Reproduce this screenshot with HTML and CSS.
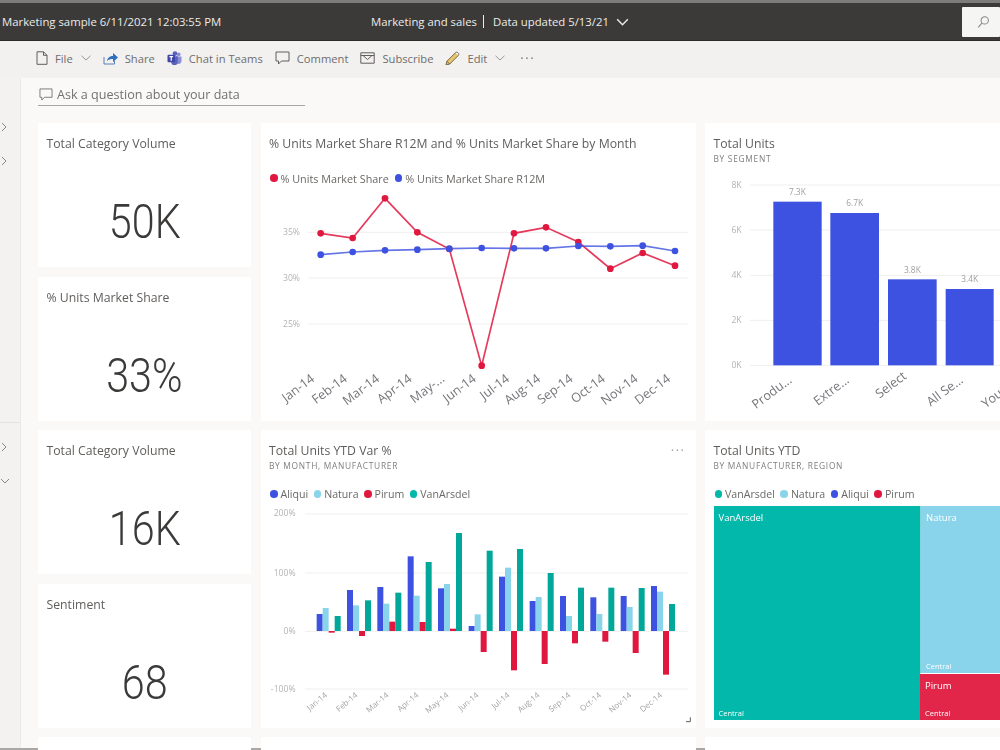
FILE: index.html
```html
<!DOCTYPE html>
<html lang="en">
<head>
<meta charset="utf-8">
<title>Marketing sample</title>
<link rel="stylesheet" href="styles.css">
</head>
<body>
<div class="app">
  <div class="topline"></div>
  <header class="header">
    <div class="report-name">Marketing sample 6/11/2021 12:03:55 PM</div>
    <div class="report-meta">
      <span>Marketing and sales</span><span class="pipe"></span><span>Data updated 5/13/21</span>
      <svg class="meta-chevron" viewBox="0 0 14 9"><path d="M1 1.500l6 6 6-6"/></svg>
    </div>
    <div class="search">
      <svg class="search-icon" viewBox="0 0 16 16"><circle cx="9.500" cy="6" r="4.500"/><path d="M6 9.500L1.500 14.500"/></svg>
    </div>
  </header>
  <nav class="toolbar">
    <div class="tool">
      <svg class="icon" viewBox="0 0 12 14"><path class="ln" d="M1 .8h6.500L11 4.300v9H1zM7.500.8v3.500H11"/></svg>
      <span>File</span>
      <svg class="chev" viewBox="0 0 10 6"><path d="M.5.8L5 5 9.500.8"/></svg>
    </div>
    <div class="tool">
      <svg class="icon wide" viewBox="0 0 15 14"><path class="ln-blue" d="M1 6v7h10.500V10"/><path class="fill-blue" d="M4 10c.5-3.500 3-5 6-5V2l5 4.500L10 11V8C7.500 8 5.500 8.500 4 10z"/></svg>
      <span>Share</span>
    </div>
    <div class="tool">
      <svg class="icon wide" viewBox="0 0 15 15"><circle class="fill-purple-l" cx="12" cy="3.500" r="2"/><circle class="fill-purple" cx="8" cy="2.800" r="2.500"/><path class="fill-purple-l" d="M9 6h6v5a3 3 0 0 1-5 2z"/><path class="fill-purple" d="M3 5.500h8v6a3.500 3.500 0 0 1-7 .5z"/><rect class="fill-indigo" x="0" y="4" width="8" height="8" rx="1"/><path class="ln-white" d="M2 6h4M4 6v4.500"/></svg>
      <span>Chat in Teams</span>
    </div>
    <div class="tool">
      <svg class="icon wide" viewBox="0 0 15 14"><path class="ln" d="M1 1h13v9H6.500L3.500 13v-3H1z"/></svg>
      <span>Comment</span>
    </div>
    <div class="tool">
      <svg class="icon wide" viewBox="0 0 15 12"><path class="ln" d="M.8.800h13.400v10.400H.8zM.8 3.500h13.400M3 3.500l4.500 4 4.500-4"/></svg>
      <span>Subscribe</span>
    </div>
    <div class="tool">
      <svg class="icon wide" viewBox="0 0 15 15"><path class="fill-pencil" d="M1.500 11L10.500 2l3 3-9 9-4 1z"/><path class="ln-pencil" d="M1.500 11L10.500 2c1-1 2-1 3 0s1 2 0 3l-9 9-4 1zM1.500 11l3 3"/></svg>
      <span>Edit</span>
      <svg class="chev" viewBox="0 0 10 6"><path d="M.5.8L5 5 9.500.8"/></svg>
    </div>
    <div class="more">···</div>
  </nav>
  <div class="body">
    <aside class="sidebar">
      <div class="side-group first">
        <svg class="side-chev" viewBox="0 0 6 10"><path d="M1 1l4 4-4 4"/></svg>
        <svg class="side-chev" viewBox="0 0 6 10"><path d="M1 1l4 4-4 4"/></svg>
      </div>
      <div class="side-group second">
        <svg class="side-chev" viewBox="0 0 6 10"><path d="M1 1l4 4-4 4"/></svg>
        <svg class="side-chev down" viewBox="0 0 10 6"><path d="M1 1l4 4 4-4"/></svg>
      </div>
    </aside>
    <main class="main">
      <div class="ask">
        <svg class="ask-icon" viewBox="0 0 15 14"><path d="M1 1h13v9H6L3 13v-3H1z"/></svg>
        <span>Ask a question about your data</span>
      </div>
      <div class="grid">
        <section class="card kpi">
          <h2 class="title">Total Category Volume</h2>
          <div class="value"><span>50K</span></div>
        </section>

        <section class="card span-2">
          <h2 class="title">% Units Market Share R12M and % Units Market Share by Month</h2>
          <div class="legend legend-line">
            <span class="item"><i class="dot red"></i>% Units Market Share</span>
            <span class="item"><i class="dot blue"></i>% Units Market Share R12M</span>
          </div>
          <svg class="chart chart-line" viewBox="3 180 1305 708">
            <g class="grid-lines">
              <path d="M145 322H1283M145 459H1283M145 597H1283"/>
            </g>
            <g class="y-label">
              <text x="120" y="329">35%</text>
              <text x="120" y="468">30%</text>
              <text x="120" y="606">25%</text>
            </g>
            <polyline class="line-red" points="182,325 278,339 375,220 472,322 568,372 665,722 762,325 858,307 955,351 1051,431 1148,384 1245,422"/>
            <polyline class="line-blue" points="182,389 278,381 375,376 472,374 568,371 665,369 762,370 858,370 955,363 1051,364 1148,362 1245,378"/>
            <g class="pts-red">
              <circle cx="182" cy="325" r="10"/><circle cx="278" cy="339" r="10"/><circle cx="375" cy="220" r="10"/><circle cx="472" cy="322" r="10"/><circle cx="568" cy="372" r="10"/><circle cx="665" cy="722" r="10"/><circle cx="762" cy="325" r="10"/><circle cx="858" cy="307" r="10"/><circle cx="955" cy="351" r="10"/><circle cx="1051" cy="431" r="10"/><circle cx="1148" cy="384" r="10"/><circle cx="1245" cy="422" r="10"/>
            </g>
            <g class="pts-blue">
              <circle cx="182" cy="389" r="10"/><circle cx="278" cy="381" r="10"/><circle cx="375" cy="376" r="10"/><circle cx="472" cy="374" r="10"/><circle cx="568" cy="371" r="10"/><circle cx="665" cy="369" r="10"/><circle cx="762" cy="370" r="10"/><circle cx="858" cy="370" r="10"/><circle cx="955" cy="363" r="10"/><circle cx="1051" cy="364" r="10"/><circle cx="1148" cy="362" r="10"/><circle cx="1245" cy="378" r="10"/>
            </g>
            <g class="x-label">
              <text transform="translate(166 766) rotate(-37)">Jan-14</text>
              <text transform="translate(264 766) rotate(-37)">Feb-14</text>
              <text transform="translate(361 766) rotate(-37)">Mar-14</text>
              <text transform="translate(458 766) rotate(-37)">Apr-14</text>
              <text transform="translate(556 766) rotate(-37)">May-...</text>
              <text transform="translate(651 766) rotate(-37)">Jun-14</text>
              <text transform="translate(751 766) rotate(-37)">Jul-14</text>
              <text transform="translate(844 766) rotate(-37)">Aug-14</text>
              <text transform="translate(941 766) rotate(-37)">Sep-14</text>
              <text transform="translate(1038 766) rotate(-37)">Oct-14</text>
              <text transform="translate(1136 766) rotate(-37)">Nov-14</text>
              <text transform="translate(1234 766) rotate(-37)">Dec-14</text>
            </g>
          </svg>
        </section>

        <section class="card span-2">
          <h2 class="title">Total Units</h2>
          <div class="subtitle">BY SEGMENT</div>
          <svg class="chart chart-bar" viewBox="15 123 1305 765">
            <g class="grid-lines">
              <path d="M150 180H1320M150 315H1320M150 451H1320M150 586H1320M150 721H1320"/>
            </g>
            <g class="y-label">
              <text x="125" y="189">8K</text>
              <text x="125" y="324">6K</text>
              <text x="125" y="460">4K</text>
              <text x="125" y="595">2K</text>
              <text x="125" y="730">0K</text>
            </g>
            <g class="bars-blue">
              <rect x="220" y="230" width="145" height="491"/>
              <rect x="391" y="264" width="146" height="457"/>
              <rect x="564" y="463" width="146" height="258"/>
              <rect x="737" y="492" width="144" height="229"/>
            </g>
            <g class="data-label">
              <text x="292" y="210">7.3K</text>
              <text x="464" y="243">6.7K</text>
              <text x="637" y="443">3.8K</text>
              <text x="809" y="472">3.4K</text>
            </g>
            <g class="x-label">
              <text transform="translate(278 770) rotate(-37)">Produ...</text>
              <text transform="translate(450 770) rotate(-37)">Extre...</text>
              <text transform="translate(622 758) rotate(-37)">Select</text>
              <text transform="translate(792 770) rotate(-37)">All Se...</text>
              <text transform="translate(964 770) rotate(-37)">Youth...</text>
            </g>
          </svg>
        </section>

        <section class="card kpi">
          <h2 class="title">% Units Market Share</h2>
          <div class="value"><span>33%</span></div>
        </section>

        <section class="card kpi">
          <h2 class="title">Total Category Volume</h2>
          <div class="value"><span>16K</span></div>
        </section>

        <section class="card span-2 has-more">
          <h2 class="title">Total Units YTD Var %</h2>
          <div class="subtitle">BY MONTH, MANUFACTURER</div>
          <div class="dots-menu">···</div>
          <div class="legend legend-col">
            <span class="item"><i class="dot blue"></i>Aliqui</span>
            <span class="item"><i class="dot sky"></i>Natura</span>
            <span class="item"><i class="dot red"></i>Pirum</span>
            <span class="item"><i class="dot teal"></i>VanArsdel</span>
          </div>
          <svg class="chart chart-col" viewBox="3 213 1305 681">
            <g class="grid-lines">
              <path d="M135 252H1283M135 429H1283M135 604H1283M135 777H1283"/>
            </g>
            <g class="y-label">
              <text x="107" y="259">200%</text>
              <text x="107" y="438">100%</text>
              <text x="107" y="612">0%</text>
              <text x="107" y="787">-100%</text>
            </g>
            <g class="bars-blue">
              <rect x="170" y="552" width="18" height="51"/><rect x="261" y="480" width="18" height="123"/><rect x="352" y="471" width="18" height="132"/><rect x="443" y="379" width="18" height="224"/><rect x="534" y="475" width="18" height="128"/><rect x="626" y="588" width="18" height="15"/><rect x="717" y="440" width="18" height="163"/><rect x="809" y="513" width="18" height="90"/><rect x="900" y="498" width="18" height="105"/><rect x="991" y="502" width="18" height="101"/><rect x="1082" y="498" width="18" height="105"/><rect x="1173" y="468" width="18" height="135"/>
            </g>
            <g class="bars-sky">
              <rect x="188" y="534" width="18" height="69"/><rect x="279" y="526" width="18" height="77"/><rect x="370" y="521" width="18" height="82"/><rect x="461" y="497" width="18" height="106"/><rect x="552" y="462" width="18" height="141"/><rect x="644" y="553" width="18" height="50"/><rect x="735" y="413" width="18" height="190"/><rect x="827" y="501" width="18" height="102"/><rect x="918" y="558" width="18" height="45"/><rect x="1009" y="552" width="18" height="51"/><rect x="1100" y="531" width="18" height="72"/><rect x="1191" y="485" width="18" height="118"/>
            </g>
            <g class="bars-red">
              <rect x="206" y="603" width="18" height="5"/><rect x="297" y="603" width="18" height="15"/><rect x="388" y="575" width="18" height="28"/><rect x="479" y="576" width="18" height="27"/><rect x="570" y="596" width="18" height="7"/><rect x="662" y="603" width="18" height="63"/><rect x="753" y="603" width="18" height="118"/><rect x="845" y="603" width="18" height="99"/><rect x="936" y="603" width="18" height="37"/><rect x="1027" y="603" width="18" height="32"/><rect x="1118" y="603" width="18" height="66"/><rect x="1209" y="603" width="18" height="131"/>
            </g>
            <g class="bars-teal">
              <rect x="224" y="558" width="18" height="45"/><rect x="315" y="511" width="18" height="92"/><rect x="406" y="488" width="18" height="115"/><rect x="497" y="396" width="18" height="207"/><rect x="588" y="309" width="18" height="294"/><rect x="680" y="362" width="18" height="241"/><rect x="771" y="357" width="18" height="246"/><rect x="863" y="429" width="18" height="174"/><rect x="954" y="473" width="18" height="130"/><rect x="1045" y="473" width="18" height="130"/><rect x="1136" y="474" width="18" height="129"/><rect x="1227" y="522" width="18" height="81"/>
            </g>
            <g class="x-label small">
              <text transform="translate(203 798) rotate(-40)">Jan-14</text>
              <text transform="translate(295 798) rotate(-40)">Feb-14</text>
              <text transform="translate(388 798) rotate(-40)">Mar-14</text>
              <text transform="translate(478 798) rotate(-40)">Apr-14</text>
              <text transform="translate(568 798) rotate(-40)">May-14</text>
              <text transform="translate(658 798) rotate(-40)">Jun-14</text>
              <text transform="translate(751 798) rotate(-40)">Jul-14</text>
              <text transform="translate(841 798) rotate(-40)">Aug-14</text>
              <text transform="translate(933 798) rotate(-40)">Sep-14</text>
              <text transform="translate(1025 798) rotate(-40)">Oct-14</text>
              <text transform="translate(1116 798) rotate(-40)">Nov-14</text>
              <text transform="translate(1208 798) rotate(-40)">Dec-14</text>
            </g>
            <path class="resize" d="M1291 862V875H1278"/>
          </svg>
        </section>

        <section class="card span-2">
          <h2 class="title">Total Units YTD</h2>
          <div class="subtitle">BY MANUFACTURER, REGION</div>
          <div class="legend legend-col">
            <span class="item"><i class="dot teal"></i>VanArsdel</span>
            <span class="item"><i class="dot sky"></i>Natura</span>
            <span class="item"><i class="dot blue"></i>Aliqui</span>
            <span class="item"><i class="dot red"></i>Pirum</span>
          </div>
          <div class="treemap">
            <div class="tile t-van"><span class="tile-name">VanArsdel</span><span class="tile-sub">Central</span></div>
            <div class="tree-col">
              <div class="tile t-nat"><span class="tile-name">Natura</span><span class="tile-sub">Central</span></div>
              <div class="tile t-pir"><span class="tile-name">Pirum</span><span class="tile-sub">Central</span></div>
            </div>
          </div>
        </section>

        <section class="card kpi">
          <h2 class="title">Sentiment</h2>
          <div class="value"><span>68</span></div>
        </section>

        <section class="card"></section>
        <section class="card"></section>
        <section class="card"></section>
      </div>
    </main>
  </div>
  <div class="footer-line"></div>
</div>
</body>
</html>
```
FILE: styles.css
```css
* { box-sizing: border-box; }
html, body { margin: 0; padding: 0; }
body { background: #faf9f8; font-family: "Open Sans", "Noto Sans", sans-serif; color: #605e5c; }

.app { width: 1000px; height: 750px; display: flex; flex-direction: column; overflow: hidden; filter: blur(.7px); }
.topline { height: 3px; flex: none; background: #7d7c7a; }

.header { height: 38px; flex: none; display: flex; align-items: center; background: #3b3a38; color: #ecebea; font-size: 11.350px; border-bottom: 1px solid #2c2b2a; }
.report-name { width: 371px; padding-left: 2px; white-space: nowrap; }
.report-meta { width: 591px; display: flex; align-items: center; white-space: nowrap; }
.pipe { width: 1px; height: 13px; margin: 0 9px 0 6px; background: #ecebea; }
.meta-chevron { width: 13px; height: 8px; margin-left: 7px; fill: none; stroke: #ecebea; stroke-width: 1.600; }
.search { width: 38px; height: 30px; flex: none; display: flex; align-items: center; padding-left: 15px; background: #f5f5f4; border-radius: 1px; }
.search-icon { width: 13px; height: 14px; fill: none; stroke: #8a8886; stroke-width: 1.300; }

.toolbar { height: 37px; flex: none; display: flex; align-items: center; gap: 12px; padding: 0 0 3px 36px; background: #f2f1f0; font-size: 11.200px; color: #6f6d6b; }
.tool { display: flex; align-items: center; gap: 7px; white-space: nowrap; }
.icon { width: 12px; height: 14px; }
.icon.wide { width: 15px; }
.ln { fill: none; stroke: #5f5e5c; stroke-width: 1; }
.ln-blue { fill: none; stroke: #5a7fb8; stroke-width: 1; }
.fill-blue { fill: #2f6fc0; }
.fill-purple { fill: #5b63b8; }
.fill-purple-l { fill: #8a90d8; }
.fill-indigo { fill: #3f46a8; }
.ln-white { fill: none; stroke: #fff; stroke-width: 1.300; }
.fill-pencil { fill: #e9c46a; }
.ln-pencil { fill: none; stroke: #6b6246; stroke-width: 1; }
.chev { width: 10px; height: 6px; margin-left: 1px; fill: none; stroke: #8f8d8b; stroke-width: .9; }
.more { margin-left: 3px; font-size: 13px; letter-spacing: 1.500px; color: #77757a; }

.body { flex: 1; min-height: 0; display: flex; }
.sidebar { width: 21px; flex: none; background: #f3f2f1; border-right: 1px solid #eceae8; display: flex; flex-direction: column; }
.side-group { display: flex; flex-direction: column; gap: 24px; }
.side-group.first { height: 345px; padding-top: 44px; border-bottom: 1px solid #e4e2e0; }
.side-group.second { padding-top: 19px; }
.side-chev { width: 6px; height: 10px; margin-left: 1px; fill: none; stroke: #8a8886; stroke-width: 1; }
.side-chev.down { width: 10px; height: 6px; margin: 2px 0 0; }

.main { flex: 1; min-width: 0; padding-left: 17px; background: #faf9f8; }
.ask { width: 267px; height: 28px; padding-top: 6px; display: flex; align-items: center; gap: 4px; font-size: 12.600px; color: #737170; border-bottom: 1px solid #a8a6a4; white-space: nowrap; }
.ask-icon { width: 14px; height: 13px; margin-left: 1px; fill: none; stroke: #77757a; stroke-width: 1; }

.grid { margin-top: 17px; display: grid; grid-template-columns: 213px 435px 435px; grid-auto-rows: 144px; gap: 9.500px; }
.card { position: relative; background: #fff; min-width: 0; overflow: hidden; }
.span-2 { grid-row: span 2; }

.title { margin: 0; padding: 13px 0 0 8.500px; height: 29px; font-size: 12.250px; line-height: 16px; font-weight: 400; color: #605e5c; white-space: nowrap; }
.subtitle { padding-left: 8.500px; height: 14px; font-size: 8.400px; line-height: 14px; letter-spacing: .7px; color: #807e7c; white-space: nowrap; }

.kpi { display: flex; flex-direction: column; }
.value { flex: 1; display: flex; justify-content: center; padding-top: 25px; align-items: center; font-family: Roboto, sans-serif; font-weight: 300; font-size: 48px; line-height: 1; color: #3b3a39; }
.value span { display: inline-block; transform: scaleX(.86); }

.legend { display: flex; align-items: center; height: 14px; padding-left: 9.500px; white-space: nowrap; color: #6b6967; }
.item { display: flex; align-items: center; gap: 3px; }
.dot { width: 7.500px; height: 7.500px; border-radius: 50%; flex: none; }
.dot.red { background: #e0173f; }
.dot.blue { background: #3d52e0; }
.dot.sky { background: #8ad4eb; }
.dot.teal { background: #01b8aa; }
.legend-line { margin-top: 19px; gap: 6px; font-size: 10.800px; }
.legend-col { margin-top: 14px; gap: 5.500px; font-size: 10.600px; }

.chart { display: block; width: 435px; }
.chart-line { height: 236px; }
.chart-bar { height: 255px; }
.chart-col { height: 227px; }

.grid-lines path { fill: none; stroke: #f0efee; stroke-width: 3; }
.y-label text { font-size: 26px; fill: #b5b3b1; text-anchor: end; }
.x-label text { font-size: 38px; fill: #77757a; text-anchor: end; }
.x-label.small text { font-size: 24px; fill: #a5a3a1; }
.data-label text { font-size: 25px; fill: #a09e9c; text-anchor: middle; }
.line-red { fill: none; stroke: #e0173f; stroke-width: 5; stroke-opacity: .85; }
.line-blue { fill: none; stroke: #3d52e0; stroke-width: 5; stroke-opacity: .8; }
.pts-red circle { fill: #e0173f; }
.pts-blue circle { fill: #3d52e0; }
.bars-blue rect { fill: #3d52e0; }
.bars-sky rect { fill: #8ad4eb; }
.bars-red rect { fill: #e0173f; }
.bars-teal rect { fill: #01a899; }
.resize { fill: none; stroke: #605e5c; stroke-width: 3; }

.dots-menu { position: absolute; top: 12px; right: 10px; font-size: 13px; line-height: 16px; letter-spacing: 1.500px; color: #a5a3a1; }

.treemap { display: flex; width: 420px; height: 214px; margin: 5px 0 0 8.500px; color: #fff; }
.tile { display: flex; flex-direction: column; justify-content: space-between; padding: 5px 5px 2px; }
.tile-name { font-size: 9.500px; line-height: 13px; }
.tile-sub { font-size: 7.500px; line-height: 10px; }
.t-van { width: 206.500px; background: #01b8aa; }
.tree-col { flex: 1; display: flex; flex-direction: column; }
.t-nat { height: 168px; background: #8ad4eb; border-bottom: 1px solid #fff; border-left: 1px solid #7fd6d6; }
.t-pir { flex: 1; background: #e1264a; }

.footer-line { height: 2px; flex: none; background: #a9a8a6; }
```
